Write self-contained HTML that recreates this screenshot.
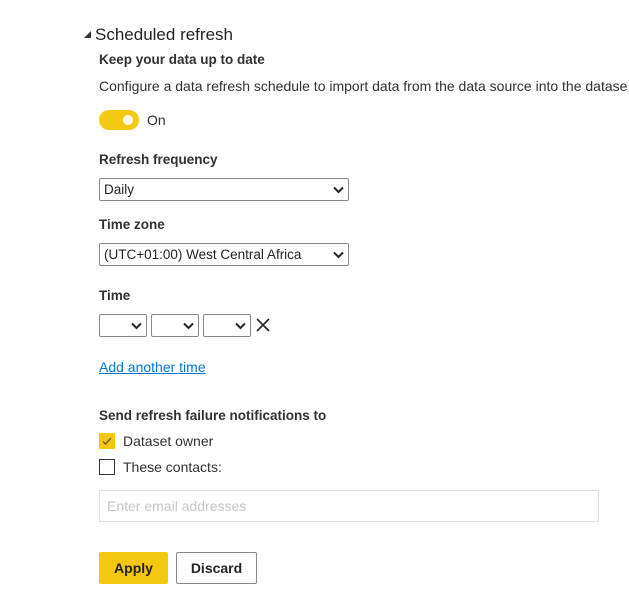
<!DOCTYPE html>
<html><head><style>
body{margin:0;width:629px;height:589px;background:#fff;font-family:"Liberation Sans",sans-serif;color:#252423;position:relative;overflow:hidden}
.a{position:absolute;white-space:nowrap}
.lbl{font-size:13.5px;font-weight:bold;color:#323130}
.sel{position:absolute;border:1px solid #8a8886;border-radius:2px;height:20px;box-sizing:border-box;background:#fff;font-size:13.5px;line-height:19px;padding-left:4px}
.sel svg{position:absolute;right:4px;top:5px}
.cb{position:absolute;width:16px;height:16px;box-sizing:border-box}
</style></head><body>
<div class="a" style="left:84px;top:31px;width:0;height:0;border-left:7px solid transparent;border-bottom:7px solid #323130"></div>
<div class="a" style="left:95px;top:25px;font-size:17px;color:#252423">Scheduled refresh</div>
<div class="a lbl" style="left:99px;top:52px">Keep your data up to date</div>
<div class="a" style="left:99px;top:78px;font-size:14px;color:#323130">Configure a data refresh schedule to import data from the data source into the datase</div>
<div class="a" style="left:99px;top:110px;width:40px;height:20px;border-radius:10px;background:#F2C811"></div>
<div class="a" style="left:123px;top:115px;width:10px;height:10px;border-radius:5px;background:#fff"></div>
<div class="a" style="left:147px;top:112px;font-size:14px;color:#323130">On</div>
<div class="a lbl" style="left:99px;top:152px">Refresh frequency</div>
<div class="sel" style="left:99px;top:178px;width:250px;height:23px;line-height:21px">Daily<svg width="11" height="8" viewBox="0 0 11 8" style="top:7px"><path d="M1 1.5L5.5 6 10 1.5" fill="none" stroke="#252423" stroke-width="2"/></svg></div>
<div class="a lbl" style="left:99px;top:217px">Time zone</div>
<div class="sel" style="left:99px;top:243px;width:250px;height:23px;line-height:21px">(UTC+01:00) West Central Africa<svg width="11" height="8" viewBox="0 0 11 8" style="top:7px"><path d="M1 1.5L5.5 6 10 1.5" fill="none" stroke="#252423" stroke-width="2"/></svg></div>
<div class="a lbl" style="left:99px;top:288px">Time</div>
<div class="sel" style="left:99px;top:314px;width:48px;height:23px"><svg width="11" height="8" viewBox="0 0 11 8" style="top:7px"><path d="M1 1.5L5.5 6 10 1.5" fill="none" stroke="#252423" stroke-width="2"/></svg></div>
<div class="sel" style="left:151px;top:314px;width:48px;height:23px"><svg width="11" height="8" viewBox="0 0 11 8" style="top:7px"><path d="M1 1.5L5.5 6 10 1.5" fill="none" stroke="#252423" stroke-width="2"/></svg></div>
<div class="sel" style="left:203px;top:314px;width:48px;height:23px"><svg width="11" height="8" viewBox="0 0 11 8" style="top:7px"><path d="M1 1.5L5.5 6 10 1.5" fill="none" stroke="#252423" stroke-width="2"/></svg></div>
<svg class="a" style="left:256px;top:318px" width="14" height="14" viewBox="0 0 14 14"><path d="M1 1L13 13M13 1L1 13" stroke="#252423" stroke-width="1.6"/></svg>
<div class="a" style="left:99px;top:359px;font-size:14px;color:#0078d4;text-decoration:underline">Add another time</div>
<div class="a lbl" style="left:99px;top:408px">Send refresh failure notifications to</div>
<div class="cb" style="left:99px;top:433px;background:#F2C811"><svg width="16" height="16" viewBox="0 0 16 16"><path d="M4 8.5L6.5 11 12 5" fill="none" stroke="#6b5a10" stroke-width="1.3"/></svg></div>
<div class="a" style="left:123px;top:433px;font-size:14px;color:#323130">Dataset owner</div>
<div class="cb" style="left:99px;top:459px;border:1px solid #323130"></div>
<div class="a" style="left:123px;top:459px;font-size:14px;color:#323130">These contacts:</div>
<div class="a" style="left:99px;top:490px;width:500px;height:32px;box-sizing:border-box;border:1px solid #e1dfdd"></div>
<div class="a" style="left:107px;top:498px;font-size:14px;color:#c8c6c4">Enter email addresses</div>
<div class="a" style="left:99px;top:552px;width:69px;height:32px;background:#F2C811;border-radius:2px;font-size:14px;font-weight:bold;line-height:32px;text-align:center;color:#252423">Apply</div>
<div class="a" style="left:176px;top:552px;width:81px;height:32px;box-sizing:border-box;border:1px solid #8a8886;border-radius:2px;font-size:14px;font-weight:bold;line-height:30px;text-align:center;color:#252423">Discard</div>
</body></html>
